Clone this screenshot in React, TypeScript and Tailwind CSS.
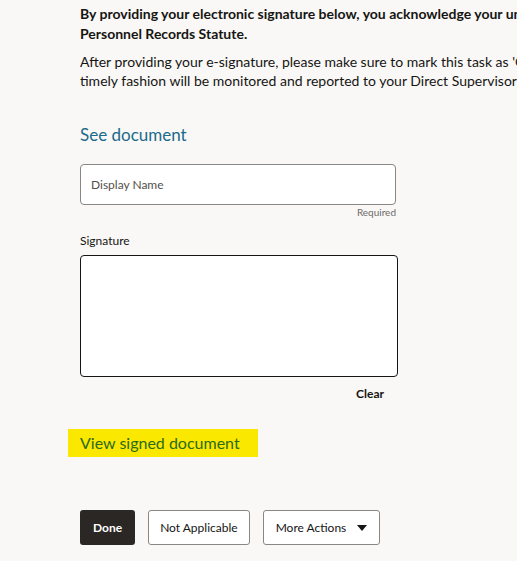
import React from 'react'

const App = () => {
    return (
        <div className="w-[517px] h-[561px] overflow-hidden bg-[#f9f8f6] text-[#161513]" style={{ fontFamily: 'Lato, "Noto Sans", sans-serif' }}>
            <section className="pl-20 pt-[4px]">
                {/* Acknowledgement */}
                <div className="text-[14px] font-bold leading-[20px] whitespace-nowrap">
                    <div>By providing your electronic signature below, you acknowledge your understanding of the</div>
                    <div>Personnel Records Statute.</div>
                </div>
                <div className="mt-[8px] text-[14px] leading-[19px] whitespace-nowrap">
                    <div>After providing your e-signature, please make sure to mark this task as 'Complete'. Failure to do so in a</div>
                    <div>timely fashion will be monitored and reported to your Direct Supervisor and HR.</div>
                </div>

                <a className="block mt-[33px] text-[17px] leading-[24px] text-[#1b6a8a]">See document</a>

                {/* Display name */}
                <div className="mt-[17px] w-[316px]">
                    <div className="h-[41px] rounded-[4px] border border-[#8a8683] bg-white flex items-center px-[10px]">
                        <span className="text-[12px] text-[#54504c]">Display Name</span>
                    </div>
                    <div className="text-right text-[10px] leading-[14px] text-[#6f6b68]">Required</div>
                </div>

                {/* Signature */}
                <div className="mt-[14px] text-[12px] leading-[16px]">Signature</div>
                <div className="mt-[6px] w-[318px] h-[122px] rounded-[4px] border border-[#161513] bg-white" />
                <div className="w-[318px] pr-[14px] mt-[9px] text-right text-[12px] font-bold leading-[16px]">Clear</div>

                <div className="mt-[27px] -ml-[12px] w-fit bg-[#fbe800] pl-[12px] pr-[18px] py-[2px] text-[16px] leading-[24px] text-[#2c6a1c]">
                    View signed document
                </div>

                {/* Actions */}
                <div className="mt-[53px] flex gap-[13px]">
                    <button className="h-[35px] px-[13px] rounded-[3px] bg-[#2b2724] text-white text-[12px] font-bold">Done</button>
                    <button className="h-[35px] px-[11px] rounded-[3px] border border-[#8a8683] bg-white text-[12px]">Not Applicable</button>
                    <button className="h-[35px] pl-[12px] pr-[12px] rounded-[3px] border border-[#8a8683] bg-white text-[12px] flex items-center gap-[11px]">
                        More Actions
                        <svg width="10" height="6" viewBox="0 0 10 6"><path d="M0 0h10L5 6z" fill="#161513" /></svg>
                    </button>
                </div>
            </section>
        </div>
    )
}

export default App
